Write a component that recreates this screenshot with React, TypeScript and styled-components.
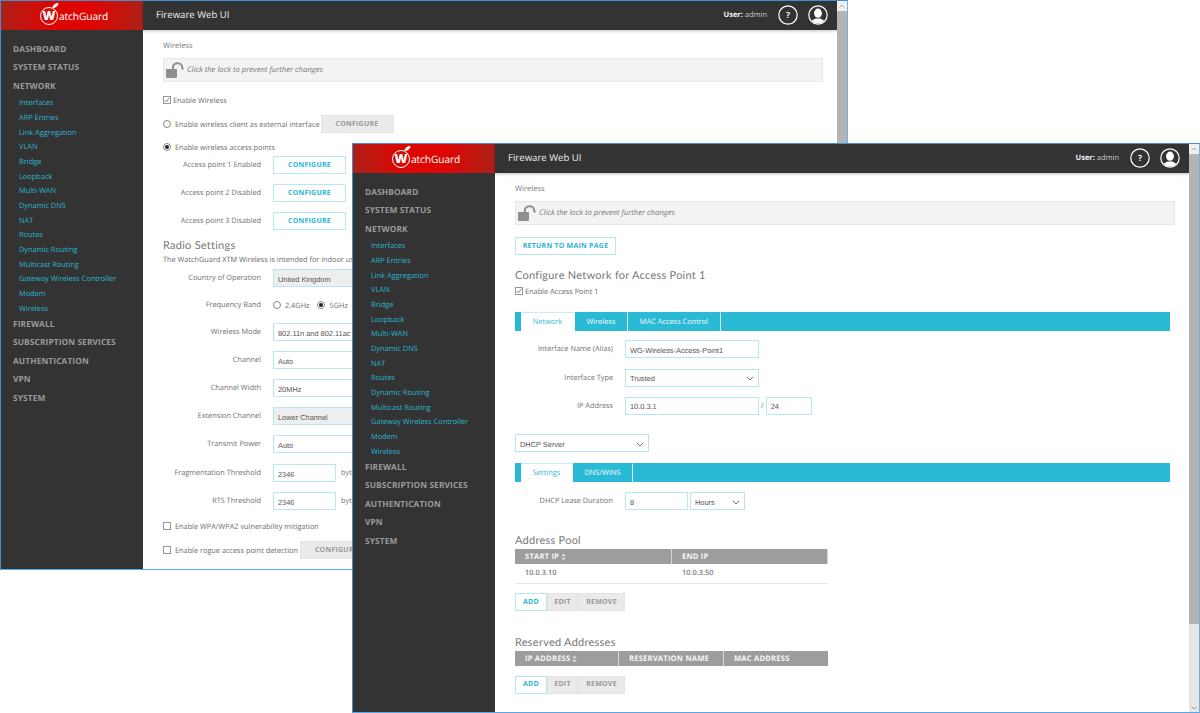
import React from 'react';
import styled, { createGlobalStyle } from 'styled-components';

const Global = createGlobalStyle`
  html, body { margin: 0; padding: 0; background: #fff; }
  body { width: 1200px; height: 713px; overflow: hidden; font-family: "Open Sans", sans-serif; color: #666; text-rendering: geometricPrecision; }
`;
const Desk = styled.div`position: relative; width: 1200px; height: 713px; overflow: hidden;`;
const Win = styled.section<{ $x: number; $y: number }>`
  position: absolute; left: ${p => p.$x}px; top: ${p => p.$y}px;
  width: 848px; height: 570px; box-sizing: border-box;
  display: flex; background: #fff;
  border: 1px solid #3f8fd2; border-right-color: #6fb0e6; border-bottom-color: #5aa7e6;
  overflow: hidden;
`;
const Side = styled.aside`width: 142px; flex: none; background: #333; display: flex; flex-direction: column;`;
const LogoBar = styled.div`
  height: 29px; flex: none; display: flex; align-items: center; padding-left: 39px;
  background: linear-gradient(90deg, #ad2119 0%, #dd0602 35%, #dd0602 65%, #ad2119 100%);
`;
const LogoMark = styled.div`
  position: relative; width: 18px; height: 18px; flex: none;
  border: 1.5px solid #fff; border-radius: 50%; box-sizing: border-box; margin-top: 1px;
  display: flex; align-items: center; justify-content: center;
  color: #fff; font-weight: 800; font-size: 12.5px; line-height: 1;
`;
const Swoosh = styled.span`
  position: absolute; left: 11px; top: -4px; width: 7px; height: 3px; border-radius: 50%; background: #fff; transform: rotate(-38deg);
`;
const LogoText = styled.span`color: #fff; font-size: 10.2px; letter-spacing: -0.1px; margin: 1px 0 0 1px; font-weight: 400;`;
const Nav = styled.nav`display: flex; flex-direction: column; padding: 11px 0 0 12px;`;
const NavHead = styled.div`
  height: 18.4px; line-height: 18.4px; font-size: 8.35px; font-weight: 700; color: #9a9a9a; letter-spacing: 0.1px; white-space: nowrap;
`;
const NavGroup = styled.div`display: flex; flex-direction: column; margin: 0 0 -0.5px;`;
const NavLink = styled.div`
  height: 14.7px; line-height: 14.7px; font-size: 7.4px; color: #2ab5cf; padding-left: 6px; white-space: nowrap;
`;
const Main = styled.div`flex: 1; min-width: 0; display: flex; flex-direction: column;`;
const Top = styled.header`
  height: 29px; flex: none; box-sizing: border-box; background: #333; display: flex; align-items: center; color: #eee;
  padding: 0 9px 2px 13px; box-shadow: 0 1px 3px rgba(0,0,0,.25); position: relative;
`;
const Title = styled.div`font-size: 9.6px; color: #ececec;`;
const User = styled.div`margin-left: auto; font-size: 7.5px; color: #ccc; margin-right: 11px;`;
const UserB = styled.b`color: #f2f2f2; font-weight: 700;`;
const IconWrap = styled.span`display: flex; width: 20px; height: 20px; & + & { margin-left: 10px; }`;
const Scroll = styled.div`width: 10px; flex: none; background: #b4b4b4; display: flex; flex-direction: column; position: relative;`;
const ScrollBtn = styled.div`height: 10px; background: #f0f0f0; display: flex; align-items: center; justify-content: center;`;
const ScrollTrack = styled.div`
  position: absolute; left: 0; right: 0; top: 480px; bottom: 0; background: #e6e6e6;
  display: flex; align-items: flex-end; justify-content: center; padding-bottom: 2px;
`;
const Body = styled.div`flex: 1; min-height: 0; padding: 10px 14px 0 20px; overflow: hidden;`;
const Crumb = styled.div`font-size: 7.6px; color: #777; height: 12px; line-height: 12px;`;
const LockBar = styled.div`
  height: 24px; margin-top: 6px; box-sizing: border-box; background: #f3f3f3; border: 1px solid #e8e8e8;
  display: flex; align-items: center; padding-left: 2px; font-size: 7.7px; font-style: italic; color: #777; gap: 2px;
`;
const Row = styled.div<{ $h: number; $mt?: number }>`
  height: ${p => p.$h}px; margin-top: ${p => p.$mt ?? 0}px;
  display: flex; align-items: center; font-size: 7.33px; color: #6c6c6c; white-space: nowrap;
`;
const Txt = styled.span`padding-top: 2px;`;
const Box = styled.span<{ $gap?: number }>`
  width: 8px; height: 8px; box-sizing: border-box; border: 1px solid #999; background: #fff; flex: none; margin-right: ${p => p.$gap ?? 2}px;
  display: flex; align-items: center; justify-content: center;
`;
const Radio = styled.span<{ $on?: boolean; $ml?: number }>`
  width: 8px; height: 8px; box-sizing: border-box; border-radius: 50%; border: 1px solid #888; background: #fff; flex: none;
  margin: 0 4px 0 ${p => p.$ml ?? 0}px; display: flex; align-items: center; justify-content: center;
  &::after { content: ""; width: 4px; height: 4px; border-radius: 50%; background: ${p => p.$on ? '#222' : 'transparent'}; }
`;
const Label = styled.span`width: 98px; flex: none; text-align: right; margin-right: 12px; font-size: 7.33px; color: #707070;`;
const Btn = styled.span<{ $w?: number; $ml?: number }>`
  ${p => p.$w ? `width: ${p.$w}px;` : ''} height: 18px; box-sizing: border-box; flex: none;
  display: inline-flex; align-items: center; justify-content: center; margin-left: ${p => p.$ml ?? 0}px;
  border: 1px solid #b7e8f2; background: #fff; color: #2ab5cf; font-size: 7px; font-weight: 700; letter-spacing: .25px;
`;
const GreyBtn = styled(Btn)`background: #eaeaea; border-color: #e4e4e4; color: #999;`;
const Field = styled.span<{ $w: number; $off?: boolean; $ml?: number }>`
  width: ${p => p.$w}px; height: 18px; box-sizing: border-box; flex: none; display: flex; align-items: center; justify-content: space-between;
  border: 1px solid #b7e8f2; background: ${p => p.$off ? '#eee' : '#fff'}; padding: 2px 4px 0; margin-left: ${p => p.$ml ?? 0}px;
  font: 7.4px "Liberation Sans", sans-serif; color: #555;
`;
const Unit = styled.span<{ $m?: string }>`margin: ${p => p.$m ?? '0 0 0 5px'}; font-size: 7.33px; color: #777;`;
const H2 = styled.h2<{ $mt?: number }>`
  margin: ${p => p.$mt ?? 0}px 0 0; font: 400 11px/15px Lato, sans-serif; color: #777; letter-spacing: .25px; white-space: nowrap;
`;
const Tabs = styled.div<{ $mt?: number }>`
  margin: ${p => p.$mt ?? 0}px 0 0; height: 19px; background: #2bbad6; display: flex; padding-left: 6px; width: 655px; box-sizing: border-box;
`;
const Tab = styled.div<{ $w: number; $on?: boolean }>`
  width: ${p => p.$w}px; flex: none; box-sizing: border-box; display: flex; align-items: center; justify-content: center;
  font-size: 7.4px; color: ${p => p.$on ? '#39b8d2' : '#f4fbfd'}; background: ${p => p.$on ? '#fff' : 'transparent'};
  border-right: 1px solid ${p => p.$on ? 'transparent' : '#d9f2f7'};
  border-top: 1px solid ${p => p.$on ? '#c9eef5' : 'transparent'};
`;
const Table = styled.div<{ $cols: string; $mt?: number }>`
  width: 313px; margin: ${p => p.$mt ?? 0}px 0 0; display: grid; grid-template-columns: ${p => p.$cols};
`;
const Th = styled.div`
  height: 14.7px; background: #9d9d9d; border-right: 1px solid #d8d8d8; color: #f5f5f5; font-size: 7.6px; font-weight: 700;
  display: flex; align-items: center; padding-left: 10px; letter-spacing: .2px; gap: 2px; white-space: nowrap;
  &:last-of-type { border-right: 0; }
`;
const Td = styled.div`height: 19.6px; box-sizing: border-box; display: flex; align-items: center; padding-left: 10px; font-size: 7.4px; color: #777; border-bottom: 1px solid #e6e6e6; font-weight: 600;`;
const BtnGroup = styled.div<{ $mt: number }>`display: flex; margin: ${p => p.$mt}px 0 0;`;

const CheckMark = () => <svg width="6" height="6" viewBox="0 0 7 7"><path d="M1 3.600 2.800 5.600 6.200 1" fill="none" stroke="#666" strokeWidth="1" /></svg>;
const Chevron = () => <svg width="8" height="5" viewBox="0 0 8 5"><path d="M.8.8 4 4 7.200.8" fill="none" stroke="#666" strokeWidth=".9" /></svg>;
const Lock = () => <svg width="19" height="16" viewBox="0 0 19 16"><path d="M0 7h10.500a.5.500 0 0 1 .5.5V15a1 1 0 0 1-1 1H1a1 1 0 0 1-1-1z" fill="#8f8f8f" /><path d="M7 7V4.500a4.500 3.500 0 0 1 9-.5c0 1 .5 2 1 3" fill="none" stroke="#8f8f8f" strokeWidth="2" transform="translate(0 .5)" /></svg>;
const Help = () => <svg width="20" height="20" viewBox="0 0 20 20"><circle cx="10" cy="10" r="9.200" fill="none" stroke="#fff" strokeWidth="1.200" /><text x="10" y="13" textAnchor="middle" fontSize="8.500" fontWeight="700" fill="#eee" fontFamily="Open Sans">?</text></svg>;
const Person = () => <svg width="20" height="20" viewBox="0 0 20 20"><defs><clipPath id="pc"><circle cx="10" cy="10" r="8.600" /></clipPath></defs><circle cx="10" cy="10" r="9.200" fill="none" stroke="#fff" strokeWidth="1.200" /><g clipPath="url(#pc)" fill="#fff"><ellipse cx="10" cy="8.200" rx="3.900" ry="4.600" /><path d="M1 20c.5-4.500 4.500-5 6.500-6.500h5c2 1.500 6 2 6.500 6.500z" /></g></svg>;
const SortIcon = () => <svg width="5" height="8" viewBox="0 0 5 8"><path d="M2.500.5 4.800 3.300H.2zM2.500 7.500 4.800 4.700H.2z" fill="#ddd" /></svg>;

const links = ['Interfaces','ARP Entries','Link Aggregation','VLAN','Bridge','Loopback','Multi-WAN','Dynamic DNS','NAT','Routes','Dynamic Routing','Multicast Routing','Gateway Wireless Controller','Modem','Wireless'];

const Shell = ({ x, y, track, children }: { x: number; y: number; track?: boolean; children: React.ReactNode }) => (
  <Win $x={x} $y={y}>
    <Side>
      <LogoBar><LogoMark>W<Swoosh /></LogoMark><LogoText>atchGuard</LogoText></LogoBar>
      <Nav>
        <NavHead>DASHBOARD</NavHead>
        <NavHead>SYSTEM STATUS</NavHead>
        <NavHead>NETWORK</NavHead>
        <NavGroup>{links.map(l => <NavLink key={l}>{l}</NavLink>)}</NavGroup>
        {['FIREWALL','SUBSCRIPTION SERVICES','AUTHENTICATION','VPN','SYSTEM'].map(h => <NavHead key={h}>{h}</NavHead>)}
      </Nav>
    </Side>
    <Main>
      <Top>
        <Title>Fireware Web UI</Title>
        <User><UserB>User:</UserB> admin</User>
        <IconWrap><Help /></IconWrap>
        <IconWrap><Person /></IconWrap>
      </Top>
      <Body>
        <Crumb>Wireless</Crumb>
        <LockBar><Lock />Click the lock to prevent further changes</LockBar>
        {children}
      </Body>
    </Main>
    <Scroll>
      <ScrollBtn><svg width="6" height="4" viewBox="0 0 6 4"><path d="M.5 3.500 3 1l2.500 2.500" fill="none" stroke="#aaa" /></svg></ScrollBtn>
      {track && <ScrollTrack><svg width="6" height="4" viewBox="0 0 6 4"><path d="M.5.5 3 3 5.500.5" fill="none" stroke="#999" /></svg></ScrollTrack>}
    </Scroll>
  </Win>
);

const Form = ({ label, children }: { label: string; children: React.ReactNode }) => (
  <><Label>{label}</Label>{children}</>
);

const Back = () => (
  <Shell x={0} y={0}>
    <Row $h={12} $mt={12}><Box><CheckMark /></Box><Txt>Enable Wireless</Txt></Row>
    <Row $h={18} $mt={9}><Radio /><Txt>Enable wireless client as external interface</Txt><GreyBtn $w={73} $ml={1}>CONFIGURE</GreyBtn></Row>
    <Row $h={12} $mt={8}><Radio $on /><Txt>Enable wireless access points</Txt></Row>
    <Row $h={18} $mt={3}><Form label="Access point 1 Enabled"><Btn $w={73}>CONFIGURE</Btn></Form></Row>
    <Row $h={18} $mt={10}><Form label="Access point 2 Disabled"><Btn $w={73}>CONFIGURE</Btn></Form></Row>
    <Row $h={18} $mt={10}><Form label="Access point 3 Disabled"><Btn $w={73}>CONFIGURE</Btn></Form></Row>
    <H2 $mt={7.5}>Radio Settings</H2>
    <Row $h={11} $mt={2}>The WatchGuard XTM Wireless is intended for indoor use only.</Row>
    <Row $h={18} $mt={3.5}><Form label="Country of Operation"><Field $w={240} $off>United Kingdom</Field></Form></Row>
    <Row $h={18} $mt={9}><Form label="Frequency Band"><Radio /><Txt>2.4GHz</Txt><Radio $on $ml={8} /><Txt>5GHz</Txt></Form></Row>
    <Row $h={18} $mt={9}><Form label="Wireless Mode"><Field $w={240}>802.11n and 802.11ac</Field></Form></Row>
    <Row $h={18} $mt={10}><Form label="Channel"><Field $w={240}>Auto</Field></Form></Row>
    <Row $h={18} $mt={10}><Form label="Channel Width"><Field $w={240}>20MHz</Field></Form></Row>
    <Row $h={18} $mt={10}><Form label="Extension Channel"><Field $w={240} $off>Lower Channel</Field></Form></Row>
    <Row $h={18} $mt={10}><Form label="Transmit Power"><Field $w={240}>Auto</Field></Form></Row>
    <Row $h={18} $mt={11}><Form label="Fragmentation Threshold"><Field $w={63}>2346</Field><Unit>bytes</Unit></Form></Row>
    <Row $h={18} $mt={10}><Form label="RTS Threshold"><Field $w={63}>2346</Field><Unit>bytes</Unit></Form></Row>
    <Row $h={12} $mt={10}><Box $gap={4} /><Txt>Enable WPA/WPA2 vulnerability mitigation</Txt></Row>
    <Row $h={18} $mt={9}><Box $gap={4} /><Txt>Enable rogue access point detection</Txt><GreyBtn $w={73} $ml={2}>CONFIGURE</GreyBtn></Row>
  </Shell>
);

const Front = () => (
  <Shell x={352} y={143} track>
    <Row $h={18.7} $mt={12}><Btn $w={101}>RETURN TO MAIN PAGE</Btn></Row>
    <H2 $mt={12}>Configure Network for Access Point 1</H2>
    <Row $h={11} $mt={3}><Box><CheckMark /></Box><Txt>Enable Access Point 1</Txt></Row>
    <Tabs $mt={15.5}><Tab $w={54} $on>Network</Tab><Tab $w={53}>Wireless</Tab><Tab $w={93}>MAC Access Control</Tab></Tabs>
    <Row $h={18} $mt={9}><Form label="Interface Name (Alias)"><Field $w={134}>WG-Wireless-Access-Point1</Field></Form></Row>
    <Row $h={18} $mt={10.5}><Form label="Interface Type"><Field $w={134}>Trusted<Chevron /></Field></Form></Row>
    <Row $h={18} $mt={10}><Form label="IP Address"><Field $w={134}>10.0.3.1</Field><Unit $m="0 2px">/</Unit><Field $w={46}>24</Field></Form></Row>
    <Row $h={18.7} $mt={19}><Field $w={134}>DHCP Server<Chevron /></Field></Row>
    <Tabs $mt={10.5}><Tab $w={52} $on>Settings</Tab><Tab $w={60}>DNS/WINS</Tab></Tabs>
    <Row $h={18} $mt={10.5}><Form label="DHCP Lease Duration"><Field $w={63}>8</Field><Field $w={55} $ml={2}>Hours<Chevron /></Field></Form></Row>
    <H2 $mt={22.5}>Address Pool</H2>
    <Table $cols="157px 156px" $mt={1.5}>
      <Th>START IP <SortIcon /></Th><Th>END IP</Th>
      <Td>10.0.3.10</Td><Td>10.0.3.50</Td>
    </Table>
    <BtnGroup $mt={9.7}><Btn $w={32}>ADD</Btn><GreyBtn $w={31}>EDIT</GreyBtn><GreyBtn $w={47}>REMOVE</GreyBtn></BtnGroup>
    <H2 $mt={24}>Reserved Addresses</H2>
    <Table $cols="104px 105px 104px" $mt={1}>
      <Th>IP ADDRESS <SortIcon /></Th><Th>RESERVATION NAME</Th><Th>MAC ADDRESS</Th>
    </Table>
    <BtnGroup $mt={9.5}><Btn $w={32}>ADD</Btn><GreyBtn $w={31}>EDIT</GreyBtn><GreyBtn $w={47}>REMOVE</GreyBtn></BtnGroup>
  </Shell>
);

export default function App() {
  return (
    <Desk>
      <Global />
      <Back />
      <Front />
    </Desk>
  );
}
